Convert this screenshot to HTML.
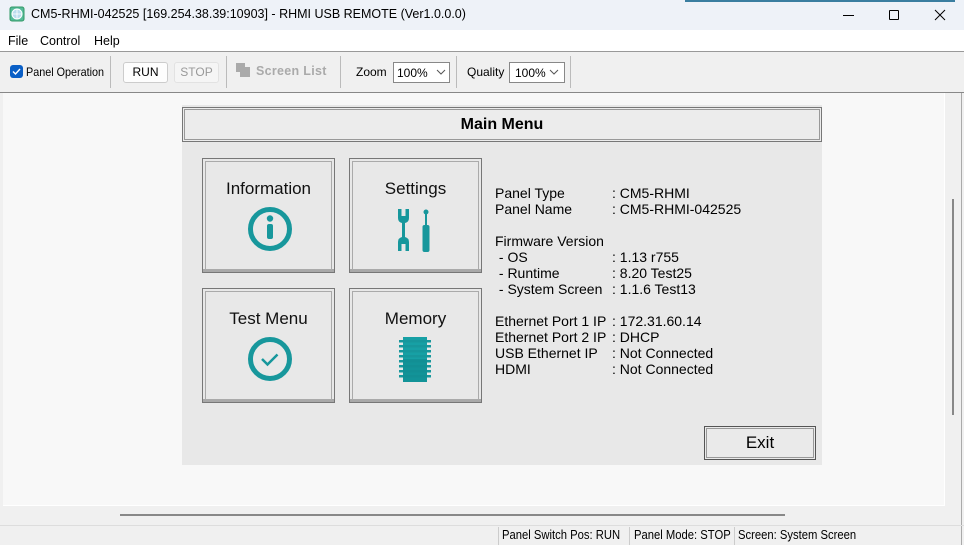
<!DOCTYPE html>
<html><head><meta charset="utf-8"><style>
*{margin:0;padding:0;box-sizing:border-box}
body{width:964px;height:545px;overflow:hidden;background:#f0f0f0;font-family:"Liberation Sans",sans-serif;position:relative;color:#000}
.a{position:absolute}
.btn{position:absolute;background:#e8e8e8;border:1px solid #777;outline:1px solid #aaa;outline-offset:-4px;box-shadow:inset 0 -3px 0 #a8a8a8}
.bt{position:absolute;left:0;right:0;top:20px;text-align:center;font-size:17px;color:#111}
.info{position:absolute;left:495px;font-size:14px;line-height:16px;color:#000;white-space:pre}
.col{position:absolute;left:612px;font-size:14px;line-height:16px;white-space:pre}
.st{position:absolute;top:528px;font-size:12.5px;transform:scaleX(0.9);transform-origin:left top;white-space:nowrap}
</style></head><body>
<div class="a" style="left:0;top:0;width:964px;height:30px;background:#eef2f8"></div>
<div class="a" style="left:685px;top:0;width:270px;height:2px;background:#3a7ea0"></div>
<svg class="a" style="left:9px;top:6px" width="16" height="16"><rect x="1" y="1" width="14" height="14" rx="2" fill="#5b9" stroke="#396" /><circle cx="8" cy="8" r="5" fill="#bde" stroke="#fff" stroke-width="1"/><path d="M3 8h10M8 3v10" stroke="#fff" stroke-width="0.8"/></svg>
<div class="a" style="left:31px;top:7px;font-size:12.5px;color:#000">CM5-RHMI-042525 [169.254.38.39:10903] - RHMI USB REMOTE (Ver1.0.0.0)</div>
<div class="a" style="left:843px;top:15px;width:11px;height:1px;background:#000"></div>
<div class="a" style="left:889px;top:10px;width:10px;height:10px;border:1px solid #000;border-radius:1px"></div>
<svg class="a" style="left:934px;top:9px" width="12" height="12"><path d="M1 1L11 11M11 1L1 11" stroke="#000" stroke-width="1"/></svg>
<div class="a" style="left:0;top:30px;width:964px;height:21px;background:#fff"></div>
<div class="a" style="left:8px;top:34px;font-size:12.5px">File</div>
<div class="a" style="left:40px;top:34px;font-size:12.5px">Control</div>
<div class="a" style="left:94px;top:34px;font-size:12.5px">Help</div>
<div class="a" style="left:0;top:51px;width:964px;height:1px;background:#999"></div>
<div class="a" style="left:10px;top:65px;width:13px;height:13px;background:#0a5fc6;border-radius:3px"></div>
<svg class="a" style="left:10px;top:65px" width="13" height="13"><path d="M3 6.5l2.5 2.5 4.5-5" stroke="#fff" stroke-width="1.4" fill="none"/></svg>
<div class="a" style="left:26px;top:65px;font-size:12px;transform:scaleX(0.9);transform-origin:left top;white-space:nowrap">Panel Operation</div>
<div class="a" style="left:110px;top:56px;width:1px;height:32px;background:#bbb"></div>
<div class="a" style="left:123px;top:62px;width:45px;height:21px;border:1px solid #ccc;border-radius:3px;background:#fdfdfd;font-size:12px;text-align:center;line-height:19px">RUN</div>
<div class="a" style="left:174px;top:62px;width:45px;height:21px;border:1px solid #e2e2e2;border-radius:3px;background:#f5f5f5;font-size:12px;text-align:center;line-height:19px;color:#999">STOP</div>
<div class="a" style="left:226px;top:56px;width:1px;height:32px;background:#bbb"></div>
<div class="a" style="left:236px;top:63px;width:9px;height:9px;background:#aaa"></div>
<div class="a" style="left:240px;top:67px;width:10px;height:10px;background:#aaa"></div>
<div class="a" style="left:256px;top:64px;font-size:12.5px;font-weight:bold;color:#aaa;letter-spacing:0.3px">Screen List</div>
<div class="a" style="left:340px;top:56px;width:1px;height:32px;background:#bbb"></div>
<div class="a" style="left:356px;top:65px;font-size:12px">Zoom</div>
<div class="a" style="left:393px;top:62px;width:57px;height:21px;border:1px solid #888;background:#fff;font-size:12px;padding:3px 3px"><span>100%</span></div>
<svg class="a" style="left:436px;top:69px" width="10" height="6"><path d="M1 1l4 4 4-4" stroke="#555" fill="none"/></svg>
<div class="a" style="left:456px;top:56px;width:1px;height:32px;background:#bbb"></div>
<div class="a" style="left:467px;top:65px;font-size:12px">Quality</div>
<div class="a" style="left:509px;top:62px;width:56px;height:21px;border:1px solid #888;background:#fff;font-size:12px;padding:3px 5px">100%</div>
<svg class="a" style="left:549px;top:69px" width="10" height="6"><path d="M1 1l4 4 4-4" stroke="#555" fill="none"/></svg>
<div class="a" style="left:570px;top:56px;width:1px;height:32px;background:#bbb"></div>
<div class="a" style="left:0;top:92px;width:964px;height:1px;background:#888"></div>
<div class="a" style="left:3px;top:93px;width:942px;height:413px;background:#f8f8f8;border-right:1px solid #fff;border-bottom:1px solid #fff"></div>
<div class="a" style="left:952px;top:199px;width:2px;height:216px;background:#888"></div>
<div class="a" style="left:120px;top:514px;width:665px;height:2px;background:#888"></div>
<div class="a" style="left:961px;top:93px;width:1px;height:452px;background:#aaa"></div>
<div class="a" style="left:182px;top:105px;width:640px;height:360px;background:#e8e8e8"></div>
<div class="a" style="left:182px;top:107px;width:640px;height:35px;border:1px solid #777;outline:1px solid #999;outline-offset:-3px;background:#ececec;text-align:center;font-size:16px;font-weight:bold;line-height:34px">Main Menu</div>
<div class="btn" style="left:202px;top:158px;width:133px;height:115px"><div class="bt">Information</div>
<svg class="a" style="left:44px;top:47px" width="46" height="46"><circle cx="23" cy="23" r="19.5" stroke="#17979c" stroke-width="5" fill="none"/><circle cx="23" cy="12.5" r="3.2" fill="#17979c"/><rect x="20" y="18" width="6" height="15" rx="2" fill="#17979c"/></svg></div>
<div class="btn" style="left:349px;top:158px;width:133px;height:115px"><div class="bt">Settings</div>
<svg class="a" style="left:46px;top:49px" width="40" height="46"><path d="M2 1v9q0 4 4 5v14q-4 1-4 5v9h3.5v-7h4v7h3.5v-9q0-4-4-5v-14q4-1 4-5v-9h-3.5v7h-4v-7z" fill="#17979c"/><circle cx="30" cy="4" r="2.5" fill="#17979c"/><rect x="29" y="5" width="2" height="13" fill="#17979c"/><rect x="26.5" y="17" width="7" height="27" rx="2" fill="#17979c"/></svg></div>
<div class="btn" style="left:202px;top:288px;width:133px;height:115px"><div class="bt">Test Menu</div>
<svg class="a" style="left:44px;top:47px" width="46" height="46"><circle cx="23" cy="23" r="19.5" stroke="#17979c" stroke-width="5" fill="none"/><path d="M15 23l5.5 5.5 10-10" stroke="#17979c" stroke-width="2.5" fill="none"/></svg></div>
<div class="btn" style="left:349px;top:288px;width:133px;height:115px"><div class="bt">Memory</div>
<svg class="a" style="left:48px;top:48px" width="34" height="46"><rect x="5" y="0" width="24" height="45" fill="#17a0a5"/><g fill="#17979c"><rect x="1" y="3" width="32" height="2.5"/><rect x="1" y="8" width="32" height="2.5"/><rect x="1" y="13" width="32" height="2.5"/><rect x="1" y="18" width="32" height="2.5"/><rect x="1" y="23" width="32" height="2.5"/><rect x="1" y="28" width="32" height="2.5"/><rect x="1" y="33" width="32" height="2.5"/><rect x="1" y="38" width="32" height="2.5"/></g><rect x="5" y="22" width="24" height="23" fill="#0f8a90" opacity=".6"/></svg></div>
<div class="info" style="top:185px">Panel Type
Panel Name

Firmware Version
 - OS
 - Runtime
 - System Screen

Ethernet Port 1 IP
Ethernet Port 2 IP
USB Ethernet IP
HDMI</div>
<div class="col" style="top:185px">: CM5-RHMI
: CM5-RHMI-042525


: 1.13 r755
: 8.20 Test25
: 1.1.6 Test13

: 172.31.60.14
: DHCP
: Not Connected
: Not Connected</div>
<div class="a" style="left:704px;top:426px;width:112px;height:34px;border:1px solid #555;outline:1px solid #999;outline-offset:-3px;background:#eaeaea;text-align:center;font-size:17px;line-height:32px">Exit</div>
<div class="a" style="left:0;top:525px;width:964px;height:1px;background:#ddd"></div>
<div class="a" style="left:498px;top:527px;width:1px;height:18px;background:#ccc"></div>
<div class="st" style="left:502px">Panel Switch Pos: RUN</div>
<div class="a" style="left:629px;top:527px;width:1px;height:18px;background:#ccc"></div>
<div class="st" style="left:634px">Panel Mode: STOP</div>
<div class="a" style="left:734px;top:527px;width:1px;height:18px;background:#ccc"></div>
<div class="st" style="left:738px">Screen: System Screen</div>
</body></html>
